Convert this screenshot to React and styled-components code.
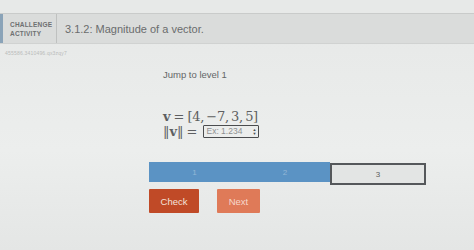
import React from "react";
import styled, { createGlobalStyle } from "styled-components";

const GlobalStyle = createGlobalStyle`
  html, body {
    margin: 0;
    padding: 0;
    background: #e8eae9;
    font-family: "Liberation Sans", Arial, sans-serif;
  }
`;

const Page = styled.div`
  width: 474px;
  height: 250px;
  overflow: hidden;
  background: linear-gradient(180deg, #e6e8e7 0%, #eceeed 60%, #e4e6e5 100%);
`;

const TopStrip = styled.div`
  height: 13px;
  background: #e7e9e8;
  border-bottom: 1px solid #c9cbca;
`;

const HeaderBar = styled.div`
  display: flex;
  align-items: stretch;
  height: 29px;
  background: #dadcdb;
  border-bottom: 1px solid #d0d2d1;
`;

const Label = styled.div`
  width: 46px;
  padding-left: 7px;
  border-left: 3px solid #8aa3b8;
  border-right: 1px solid #bfc1c0;
  display: flex;
  flex-direction: column;
  justify-content: center;
  font-size: 6.5px;
  font-weight: 700;
  line-height: 9px;
  color: #6e7071;
  letter-spacing: 0.2px;
`;

const Title = styled.div`
  padding-left: 8px;
  display: flex;
  align-items: center;
  font-size: 11px;
  color: #6a6c6d;
`;

const Code = styled.div`
  padding: 6px 0 0 5px;
  font-size: 5px;
  color: #b9bbba;
  letter-spacing: 0.2px;
`;

const Content = styled.div`
  margin-left: 149px;
  width: 277px;
`;

const Jump = styled.div`
  margin: 13px 0 0 14px;
  font-size: 9.5px;
  color: #646667;
`;

const MathBlock = styled.div`
  margin: 29px 0 0 14px;
  font-family: "DejaVu Serif", "Liberation Serif", serif;
  font-size: 13px;
  color: #5d5f61;
  line-height: 15px;
`;

const MathRow = styled.div`
  display: flex;
  align-items: center;
  gap: 3px;
  height: 15px;
`;

const Bold = styled.span`
  font-weight: 700;
`;

const Vector = styled.span`
  letter-spacing: -0.3px;
`;

const Input = styled.div`
  display: flex;
  align-items: center;
  justify-content: space-between;
  width: 50px;
  height: 11px;
  margin-left: 3px;
  padding: 0 2px;
  border: 1.5px solid #4a4c4e;
  border-radius: 1px;
  font-family: "Liberation Sans", Arial, sans-serif;
  font-size: 8.5px;
  color: #8e9091;
`;

const Spin = styled.span`
  display: flex;
  flex-direction: column;
  font-size: 4px;
  line-height: 4px;
  color: #4a4c4e;
`;

const Levels = styled.div`
  display: flex;
  margin-top: 23px;
  align-items: flex-start;
`;

const Level = styled.div`
  flex: 0 0 ${(p) => p.$w}px;
  height: ${(p) => (p.$done ? 20 : 18)}px;
  display: flex;
  align-items: center;
  justify-content: center;
  font-size: 8px;
  color: ${(p) => (p.$done ? "#93b7d6" : "#5c5e60")};
  background: ${(p) => (p.$done ? "#5b93c4" : "#e3e5e4")};
  border: ${(p) => (p.$done ? "none" : "2px solid #55585b")};
  margin-top: ${(p) => (p.$done ? 0 : 1)}px;
`;

const Buttons = styled.div`
  display: flex;
  gap: 18px;
  margin-top: 4px;
`;

const Button = styled.div`
  width: ${(p) => p.$w}px;
  height: 24px;
  display: flex;
  align-items: center;
  justify-content: center;
  font-size: 9.5px;
  color: ${(p) => (p.$primary ? "#f3e2dc" : "#f6d8cc")};
  background: ${(p) => (p.$primary ? "#c04a27" : "#df7a58")};
  border-radius: 1px;
`;

export default function App() {
  return (
    <Page>
      <GlobalStyle />
      <TopStrip />
      <HeaderBar>
        <Label>
          <span>CHALLENGE</span>
          <span>ACTIVITY</span>
        </Label>
        <Title>3.1.2: Magnitude of a vector.</Title>
      </HeaderBar>
      <Code>455586.3410496.qx3zqy7</Code>
      <Content>
        <Jump>Jump to level 1</Jump>
        <MathBlock>
          <MathRow>
            <Bold>v</Bold>
            <span>=</span>
            <Vector>[4,&thinsp;−7,&thinsp;3,&thinsp;5]</Vector>
          </MathRow>
          <MathRow>
            <span>
              ‖<Bold>v</Bold>‖
            </span>
            <span>=</span>
            <Input>
              <span>Ex: 1.234</span>
              <Spin>
                <span>▲</span>
                <span>▼</span>
              </Spin>
            </Input>
          </MathRow>
        </MathBlock>
        <Levels>
          <Level $done $w={91}>1</Level>
          <Level $done $w={90}>2</Level>
          <Level $w={92}>3</Level>
        </Levels>
        <Buttons>
          <Button $primary $w={50}>Check</Button>
          <Button $w={43}>Next</Button>
        </Buttons>
      </Content>
    </Page>
  );
}
